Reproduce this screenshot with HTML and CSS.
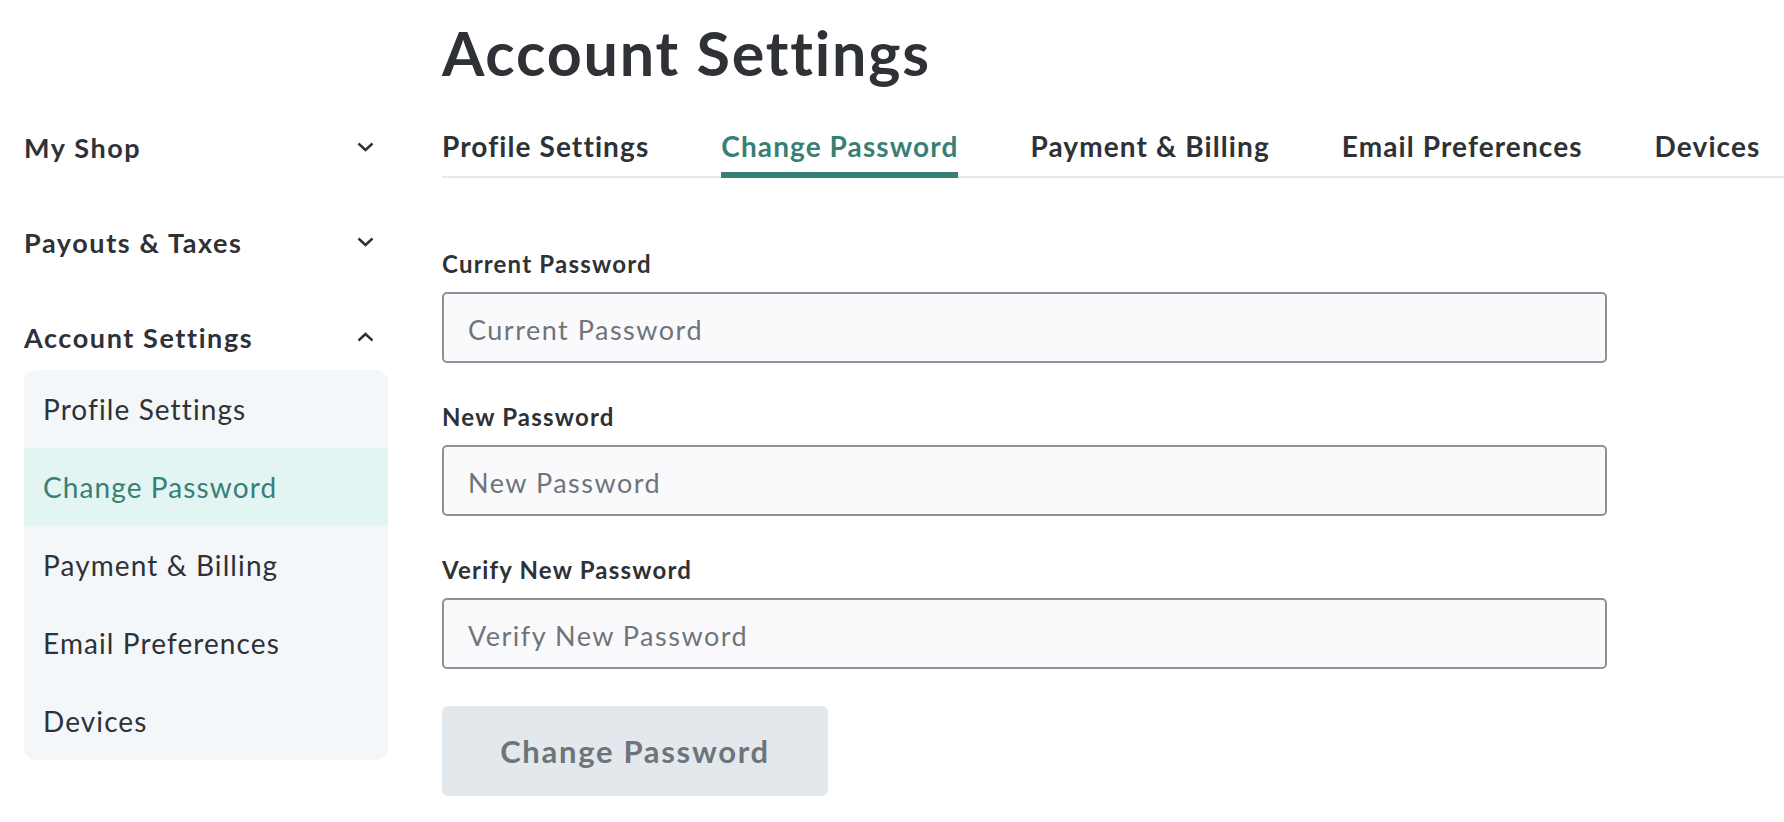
FILE: index.html
```html
<!DOCTYPE html>
<html lang='en'>

<head>
    <meta charset='UTF-8' />
    <meta name='viewport' content='width=device-width, initial-scale=1.0'/>
    <title>Account Settings</title>
    <link rel="stylesheet" href="styles.css">
</head>
<body>
    <div class='page'>
        <aside class='sidebar'>
            <div class='section-title'>
                <span>My Shop</span>
                <svg class='chevron' viewBox='0 0 17 10'><polyline points='1.5,1.5 8.5,8 15.5,1.5' /></svg>
            </div>
            <div class='section-title'>
                <span>Payouts &amp; Taxes</span>
                <svg class='chevron' viewBox='0 0 17 10'><polyline points='1.5,1.5 8.5,8 15.5,1.5' /></svg>
            </div>
            <div class='section-title'>
                <span>Account Settings</span>
                <svg class='chevron' viewBox='0 0 17 10'><polyline points='1.5,8.5 8.5,2 15.5,8.5' /></svg>
            </div>
            <ul class='sub-menu'>
                <li>Profile Settings</li>
                <li class='active'>Change Password</li>
                <li>Payment &amp; Billing</li>
                <li>Email Preferences</li>
                <li>Devices</li>
            </ul>
        </aside>

        <main class='main'>
            <h1>Account Settings</h1>
            <nav class='tabs'>
                <a class='tab'>Profile Settings</a>
                <a class='tab active'>Change Password</a>
                <a class='tab'>Payment &amp; Billing</a>
                <a class='tab'>Email Preferences</a>
                <a class='tab'>Devices</a>
            </nav>

            <form class='password-form'>
                <label for='current'>Current Password</label>
                <input type='password' id='current' placeholder='Current Password' />

                <label for='new'>New Password</label>
                <input type='password' id='new' placeholder='New Password' />

                <label for='verify'>Verify New Password</label>
                <input type='password' id='verify' placeholder='Verify New Password' />

                <button type='button' disabled>Change Password</button>
            </form>
        </main>
    </div>
</body>
</html>
```

FILE: styles.css
```css
:root {
    --text: #2e3236;
    --teal: #387f76;
    --teal-bg: #e2f5f3;
    --panel-bg: #f3f7fa;
    --line: #e4e9ed;
    --input-bg: #fafafc;
    --input-border: #8c9297;
    --muted: #6e757a;
    --button-bg: #e3e8ec;
}
body {
    font-family: 'Lato', 'Liberation Sans', sans-serif;
    margin: 0;
    background: #fff;
    color: var(--text);
}
.page {
    display: flex;
    padding-left: 24px;
}
.sidebar {
    width: 364px;
    flex-shrink: 0;
    padding-top: 129px;
}
.section-title {
    display: flex;
    justify-content: space-between;
    align-items: center;
    height: 36px;
    padding-right: 14px;
    margin-bottom: 59px;
    font-size: 27px;
    font-weight: bold;
    letter-spacing: 1.6px;
}
.section-title:nth-child(3) {
    margin-bottom: 15px;
}
.chevron {
    width: 17px;
    height: 10px;
    fill: none;
    stroke: var(--text);
    stroke-width: 2.4;
}
.sub-menu {
    list-style: none;
    margin: 0;
    padding: 0;
    background: var(--panel-bg);
    border-radius: 12px;
    overflow: hidden;
}
.sub-menu li {
    height: 78px;
    line-height: 78px;
    padding-left: 19px;
    font-size: 28px;
    letter-spacing: 1.1px;
}
.sub-menu li.active {
    background: var(--teal-bg);
    color: var(--teal);
}
.main {
    flex: 1;
    margin-left: 54px;
    padding-top: 17px;
}
h1 {
    margin: 0;
    font-size: 61px;
    line-height: 72px;
    font-weight: bold;
    letter-spacing: 1.8px;
}
.tabs {
    display: flex;
    gap: 72px;
    margin-top: 39px;
    border-bottom: 2px solid var(--line);
}
.tab {
    font-size: 28px;
    font-weight: bold;
    line-height: 36px;
    letter-spacing: 1.1px;
    padding-bottom: 8px;
    border-bottom: 6px solid transparent;
    margin-bottom: -2px;
    cursor: pointer;
}
.tab.active {
    color: var(--teal);
    border-bottom-color: var(--teal);
}
.password-form {
    display: flex;
    flex-direction: column;
    align-items: flex-start;
    margin-top: 72px;
}
.password-form label {
    font-size: 24px;
    font-weight: bold;
    line-height: 28px;
    letter-spacing: 1.2px;
    margin-bottom: 14px;
}
.password-form input {
    box-sizing: border-box;
    width: 1165px;
    height: 71px;
    margin-bottom: 40px;
    padding: 3px 24px 0;
    border: 2px solid var(--input-border);
    border-radius: 5px;
    background: var(--input-bg);
    font-family: inherit;
    font-size: 27px;
    letter-spacing: 1.5px;
    color: var(--text);
}
.password-form input::placeholder {
    color: var(--muted);
}
.password-form button {
    margin-top: -3px;
    width: 386px;
    height: 90px;
    border: none;
    border-radius: 6px;
    background: var(--button-bg);
    color: var(--muted);
    font-family: inherit;
    font-size: 31px;
    font-weight: bold;
    letter-spacing: 1.7px;
}
```
